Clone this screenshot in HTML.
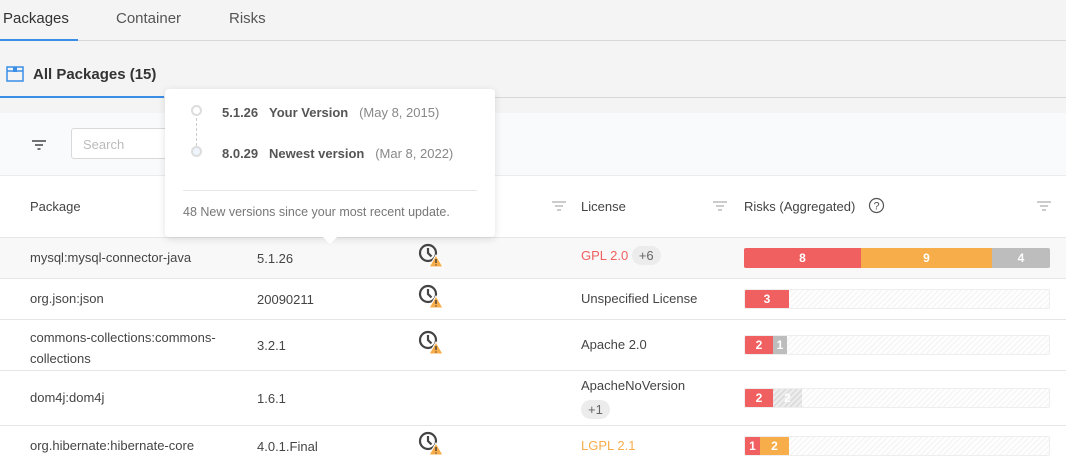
<!DOCTYPE html><html><head><style>
body{margin:0;width:1066px;height:466px;overflow:hidden;background:#f4f4f4;font-family:"Liberation Sans",sans-serif;color:#444;position:relative;font-size:13px}
.a{position:absolute}
.tab{position:absolute;top:10px;font-size:15px;color:#555}
.flt{position:absolute;width:14px;height:10px}
.row{position:absolute;left:0;width:1066px;border-top:1px solid #e6e6e6;background:#fff}
.bar{position:absolute;left:744px;width:306px;height:20px;border:1px solid #eee;box-sizing:border-box;background:repeating-linear-gradient(135deg,#f7f7f7 0 2px,#fff 2px 4px);display:flex;border-radius:2px;overflow:hidden}
.bar span{display:flex;align-items:center;justify-content:center;color:#fff;font-weight:bold;font-size:12px;height:100%}
.r{background:#f06060}.o{background:#f8ad4b}.g{background:#bdbdbd}
.clk{position:absolute;left:418px;width:26px;height:26px}
.chip{display:inline-block;background:#ececec;border-radius:10px;padding:2px 7px;color:#666;font-size:13px}
</style></head><body>
<div class="tab" style="left:3px;color:#333">Packages</div>
<div class="tab" style="left:116px">Container</div>
<div class="tab" style="left:229px">Risks</div>
<div class="a" style="left:0;top:40px;width:1066px;height:1px;background:#d8d8d8"></div>
<div class="a" style="left:0;top:39px;width:78px;height:2px;background:#3a8ee6"></div>
<svg class="a" style="left:6px;top:65px" width="18" height="18" viewBox="0 0 18 18"><rect x="1" y="2" width="16" height="14" fill="none" stroke="#3a8ee6" stroke-width="1.5"/><line x1="1" y1="6" x2="17" y2="6" stroke="#3a8ee6" stroke-width="1.5"/><rect x="7" y="2" width="4" height="5" fill="#3a8ee6"/></svg>
<div class="a" style="left:33px;top:66px;font-size:15px;font-weight:bold;color:#333">All Packages (15)</div>
<div class="a" style="left:0;top:97px;width:1066px;height:1px;background:#d8d8d8"></div>
<div class="a" style="left:0;top:96px;width:164px;height:2px;background:#3a8ee6"></div>
<div class="a" style="left:0;top:113px;width:1066px;height:62px;background:#f8fafc"></div>
<svg class="a" style="left:31px;top:139px" width="16" height="12"><path d="M1 2h14M4 6h8M6.5 10h3" stroke="#444" stroke-width="1.6"/></svg>
<div class="a" style="left:71px;top:128px;width:120px;height:31px;border:1px solid #d9d9d9;border-radius:3px;background:#fff;box-sizing:border-box;padding:8px 11px;color:#bbb">Search</div>
<div class="a" style="left:0;top:175px;width:1066px;height:62px;background:#fff;border-top:1px solid #ececec"></div>
<div class="a" style="left:30px;top:199px">Package</div>
<div class="a" style="left:581px;top:199px">License</div>
<div class="a" style="left:744px;top:199px">Risks (Aggregated)</div>
<svg class="a" style="left:868px;top:197px" width="17" height="17"><circle cx="8.5" cy="8.5" r="7" fill="none" stroke="#555" stroke-width="1.2"/><text x="8.5" y="12.5" font-size="11" text-anchor="middle" fill="#555" font-family="Liberation Sans">?</text></svg>
<svg class="flt" style="left:552px;top:201px"><path d="M0 1h14M3 5h8M5 9h4" stroke="#bbb" stroke-width="1.5"/></svg>
<svg class="flt" style="left:713px;top:201px"><path d="M0 1h14M3 5h8M5 9h4" stroke="#bbb" stroke-width="1.5"/></svg>
<svg class="flt" style="left:1037px;top:201px"><path d="M0 1h14M3 5h8M5 9h4" stroke="#bbb" stroke-width="1.5"/></svg>
<svg width="0" height="0" style="position:absolute"><defs><g id="ck"><circle cx="10" cy="10" r="8" fill="none" stroke="#444" stroke-width="2.2"/><path d="M10 5v5l3.5 3.5" stroke="#444" stroke-width="2.2" fill="none"/><path d="M18 12l7 12h-14z" fill="#f8ad4b" stroke="#fff" stroke-width="1"/><path d="M18 16v4M18 21.5v1" stroke="#333" stroke-width="1.3"/></g></defs></svg>

<div class="row" style="top:237px;height:41px;background:#f8f8f8"></div>
<div class="a" style="left:30px;top:250px">mysql:mysql-connector-java</div>
<div class="a" style="left:257px;top:251px">5.1.26</div>
<svg class="clk" style="top:243px"><use href="#ck"/></svg>
<div class="a" style="left:581px;top:246px"><span style="color:#f06060">GPL 2.0</span> <span class="chip">+6</span></div>
<div class="bar" style="top:248px;border:0"><span class="r" style="width:117px">8</span><span class="o" style="width:131px">9</span><span class="g" style="width:58px">4</span></div>

<div class="row" style="top:278px;height:41px"></div>
<div class="a" style="left:30px;top:291px">org.json:json</div>
<div class="a" style="left:257px;top:292px">20090211</div>
<svg class="clk" style="top:284px"><use href="#ck"/></svg>
<div class="a" style="left:581px;top:291px">Unspecified License</div>
<div class="bar" style="top:289px"><span class="r" style="width:44px">3</span></div>

<div class="row" style="top:319px;height:51px"></div>
<div class="a" style="left:30px;top:327px;line-height:21px">commons-collections:commons-<br>collections</div>
<div class="a" style="left:257px;top:338px">3.2.1</div>
<svg class="clk" style="top:330px"><use href="#ck"/></svg>
<div class="a" style="left:581px;top:337px">Apache 2.0</div>
<div class="bar" style="top:335px"><span class="r" style="width:28px">2</span><span class="g" style="width:14px">1</span></div>

<div class="row" style="top:370px;height:55px"></div>
<div class="a" style="left:30px;top:390px">dom4j:dom4j</div>
<div class="a" style="left:257px;top:391px">1.6.1</div>
<div class="a" style="left:581px;top:378px">ApacheNoVersion</div>
<div class="a" style="left:581px;top:400px"><span class="chip">+1</span></div>
<div class="bar" style="top:388px"><span class="r" style="width:28px">2</span><span style="width:29px;background:repeating-linear-gradient(135deg,#ddd 0 2px,#eee 2px 4px)">2</span></div>

<div class="row" style="top:425px;height:41px"></div>
<div class="a" style="left:30px;top:438px">org.hibernate:hibernate-core</div>
<div class="a" style="left:257px;top:439px">4.0.1.Final</div>
<svg class="clk" style="top:431px"><use href="#ck"/></svg>
<div class="a" style="left:581px;top:438px;color:#f8ad4b">LGPL 2.1</div>
<div class="bar" style="top:436px"><span class="r" style="width:15px">1</span><span class="o" style="width:29px">2</span></div>

<div class="a" style="left:165px;top:89px;width:330px;height:148px;background:#fff;border-radius:4px;box-shadow:0 2px 8px rgba(0,0,0,.12)"></div>
<div class="a" style="left:325px;top:232px;width:10px;height:10px;background:#fff;transform:rotate(45deg)"></div>
<div class="a" style="left:191px;top:105px;width:11px;height:11px;border:2px solid #ddd;border-radius:50%;box-sizing:border-box;background:#fff"></div>
<div class="a" style="left:196px;top:118px;width:0;height:28px;border-left:1px dashed #ccc"></div>
<div class="a" style="left:191px;top:146px;width:11px;height:11px;border:2px solid #ddd;border-radius:50%;box-sizing:border-box;background:#eef5fc"></div>
<div class="a" style="left:222px;top:105px"><b style="color:#555">5.1.26</b>&nbsp;&nbsp; <b style="color:#555">Your Version</b> &nbsp; <span style="color:#888">(May 8, 2015)</span></div>
<div class="a" style="left:222px;top:146px"><b style="color:#555">8.0.29</b>&nbsp;&nbsp; <b style="color:#555">Newest version</b> &nbsp; <span style="color:#888">(Mar 8, 2022)</span></div>
<div class="a" style="left:183px;top:190px;width:294px;height:1px;background:#e6e6e6"></div>
<div class="a" style="left:183px;top:205px;color:#777;font-size:12.5px">48 New versions since your most recent update.</div>
</body></html>
